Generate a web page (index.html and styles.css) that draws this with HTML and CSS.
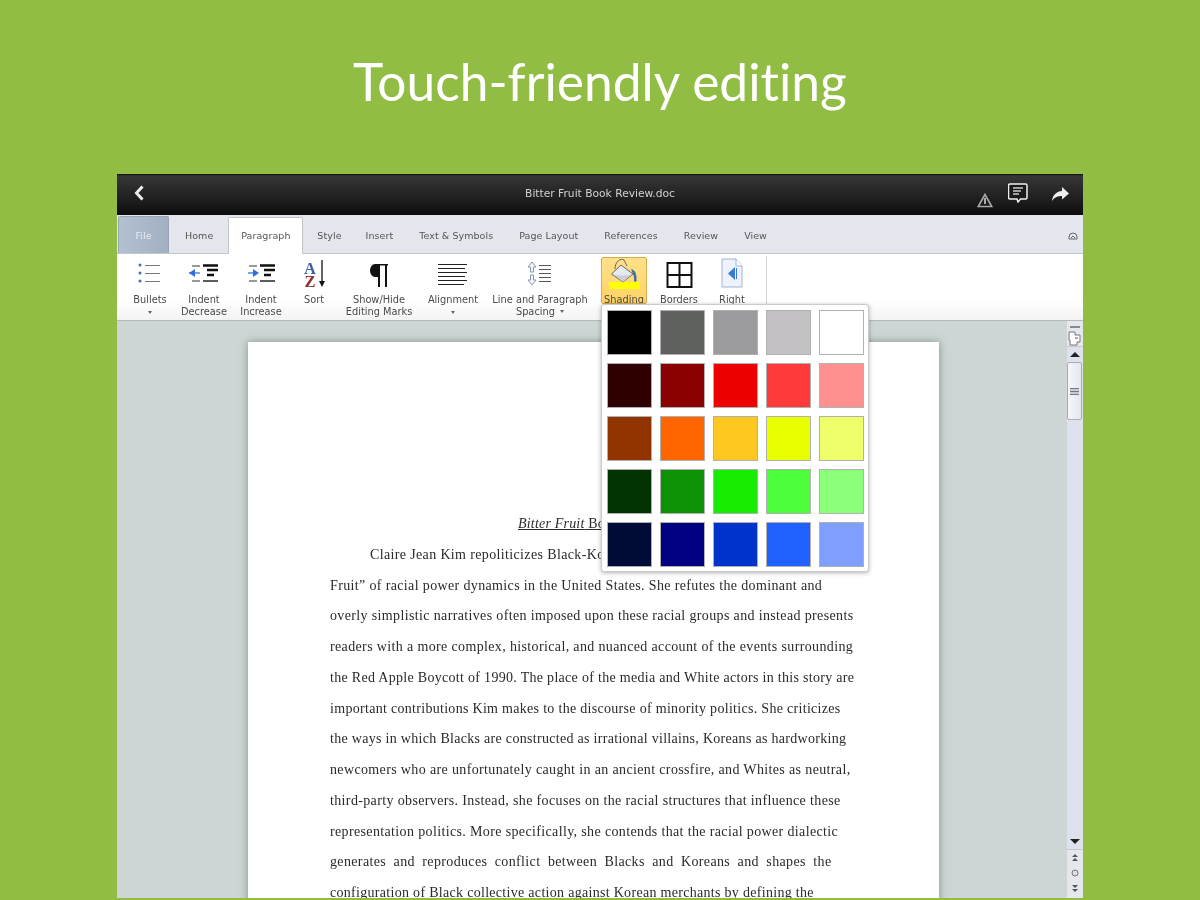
FILE: index.html
```html
<!DOCTYPE html>
<html lang="en">
<head>
<meta charset="utf-8">
<title>Touch-friendly editing</title>
<link rel="stylesheet" href="styles.css">
</head>
<body>
<h1 class="headline">Touch-friendly editing</h1>
<div class="window">
  <header class="titlebar">
    <svg class="back" viewBox="0 0 12 16"><path d="M9.500 1.500 3.500 8l6 6.500" fill="none" stroke="#eee" stroke-width="3"/></svg>
    <span class="doc-name">Bitter Fruit Book Review.doc</span>
    <div class="title-actions">
      <svg class="warn" viewBox="0 0 16 15"><path d="M8 1.500 1.200 13.500h13.600z" fill="none" stroke="#aaa" stroke-width="1.600"/><path d="M8 5v6" stroke="#aaa" stroke-width="2"/></svg>
      <svg class="comment" viewBox="0 0 20 20"><path d="M2.500 1h15q1.500 0 1.500 1.500v12q0 1.500-1.500 1.500h-5l-2.500 3-1-3h-7q-1.500 0-1.500-1.500v-12q0-1.500 1.500-1.500z" fill="#1a1a1a" stroke="#eee" stroke-width="1.500"/><path d="M5 5h10M5 8h8M5 11h6" stroke="#ccc" stroke-width="1.300"/></svg>
      <svg class="share" viewBox="0 0 19 17"><path d="M11 1l7 6.500-7 6v-3.500c-4 0-7.500 1-10 5 .5-5.500 4-9.500 10-10z" fill="#eee"/></svg>
    </div>
  </header>
  <nav class="tabs">
    <span class="tab tab-file">File</span>
    <span class="tab tab-home">Home</span>
    <span class="tab tab-active">Paragraph</span>
    <span class="tab tab-style">Style</span>
    <span class="tab tab-insert">Insert</span>
    <span class="tab tab-plain">Text &amp; Symbols</span>
    <span class="tab tab-plain">Page Layout</span>
    <span class="tab tab-plain">References</span>
    <span class="tab tab-plain">Review</span>
    <span class="tab tab-plain">View</span>
    <svg class="collapse" viewBox="0 0 10 8"><path d="M1 7V5a4 4 0 0 1 8 0v2z" fill="none" stroke="#666"/><path d="M3 6l2-2 2 2" fill="none" stroke="#666"/></svg>
  </nav>
  <div class="ribbon">
    <div class="tool w44">
      <svg class="ico" viewBox="0 0 36 36"><g fill="#3c6fc4"><circle cx="8" cy="9" r="1.500"/><circle cx="8" cy="17" r="1.500"/><circle cx="8" cy="25" r="1.500"/></g><path d="M13 9.500h15M13 17.500h15M13 25.500h15" stroke="#777"/></svg>
      <span class="label">Bullets</span><span class="caret"></span>
    </div>
    <div class="tool w64">
      <svg class="ico" viewBox="0 0 36 36"><path d="M17 9.500h15M21 14h11M21 19h7" stroke="#111" stroke-width="2.400"/><path d="M17 25h15" stroke="#333" stroke-width="1.600"/><path d="M3 17h11" stroke="#7aa6e8" stroke-width="2"/><path d="M3 17l6-4v8z" fill="#2f6fd8"/><path d="M6 10h8M6 25h8" stroke="#999" stroke-width="2"/></svg>
      <span class="label">Indent<br>Decrease</span>
    </div>
    <div class="tool w50">
      <svg class="ico" viewBox="0 0 36 36"><path d="M17 9.500h15M21 14h11M21 19h7" stroke="#111" stroke-width="2.400"/><path d="M17 25h15" stroke="#333" stroke-width="1.600"/><path d="M5 17h9" stroke="#7aa6e8" stroke-width="2"/><path d="M16 17l-6-4v8z" fill="#2f6fd8"/><path d="M6 10h8M6 25h8" stroke="#999" stroke-width="2"/></svg>
      <span class="label">Indent<br>Increase</span>
    </div>
    <div class="tool w56">
      <svg class="ico" viewBox="0 0 36 36"><text x="8" y="18" class="az az-a">A</text><text x="8.500" y="31" class="az az-z">Z</text><path d="M26 4v24" stroke="#111" stroke-width="1.300"/><path d="M23 25h6l-3 6z" fill="#111"/></svg>
      <span class="label">Sort</span>
    </div>
    <div class="tool w74">
      <svg class="ico" viewBox="0 0 36 36"><path d="M17 8h-3a5 6.500 0 0 0 0 13h3zM17 8h10v1.500h-1v21.500h-2V9.500h-5v21.500h-2z" fill="#111"/></svg>
      <span class="label">Show/Hide<br>Editing Marks</span>
    </div>
    <div class="tool w74">
      <svg class="ico" viewBox="0 0 36 36"><path d="M3 8.500h29M3 12.500h27M3 16.500h29M3 20.500h27M3 24.500h29M3 28.500h26" stroke="#222"/></svg>
      <span class="label">Alignment</span><span class="caret"></span>
    </div>
    <div class="tool w100">
      <svg class="ico" viewBox="0 0 36 36"><path d="M14 11l-4-5-4 5h2.500v5h3v-5zM14 24l-4 5-4-5h2.500v-5h3v5z" fill="#f4f6fb" stroke="#8b97a8"/><path d="M17 9.500h12M17 13.500h12M17 17.500h12M17 21.500h12M17 25.500h12" stroke="#555"/></svg>
      <span class="label">Line and Paragraph<br>Spacing <i class="caret caret-inline"></i></span>
    </div>
    <div class="tool tool-on">
      <svg class="ico" viewBox="0 0 36 36"><rect x="3" y="25" width="31" height="7" fill="#ffff00"/><path d="M25 12c4 1 6 4 5.500 12-.5 1-2 1-2.500 0 0-3 0-5-1-7z" fill="#3f6fa8"/><path d="M5.500 17 15 8l12 9-10 8z" fill="#e6e9ef" stroke="#666"/><path d="M7 17c5 2 13 2 19 0l-9 8z" fill="#c9ced8"/><path d="M9 12C9 4 15 1 18 3l3 6" fill="none" stroke="#666"/></svg>
      <span class="label">Shading</span>
    </div>
    <div class="tool w64">
      <svg class="ico" viewBox="0 0 36 36"><path d="M6.500 7h24v24h-24zM18.500 7v24M6.500 19h24" fill="none" stroke="#111" stroke-width="2"/></svg>
      <span class="label">Borders</span>
    </div>
    <div class="tool w42">
      <svg class="ico" viewBox="0 0 36 36"><path d="M8 3h14l6 7v21H8z" fill="#eef3fb" stroke="#9fb4d6"/><path d="M22 3v7h6" fill="#fff" stroke="#9fb4d6"/><path d="M21 11v13l-7-6.500z" fill="#3a78d8"/><path d="M22.500 12v11" stroke="#3a78d8"/></svg>
      <span class="label">Right</span>
    </div>
    <span class="ribbon-end"></span>
  </div>
  <div class="workspace">
    <div class="doc-area">
      <article class="page">
        <p class="doc-title"><u><i>Bitter Fruit</i> Book Review</u></p>
        <p class="doc-body"><span class="indent"></span>Claire Jean Kim repoliticizes Black-Korean conflict in her book <i>Bitter</i><br>
Fruit” of racial power dynamics in the United States. She refutes the dominant and<br>
overly simplistic narratives often imposed upon these racial groups and instead presents<br>
readers with a more complex, historical, and nuanced account of the events surrounding<br>
<span class="tight">the Red Apple Boycott of 1990. The place of the media and White actors in this story are</span><br>
<span class="tight">important contributions Kim makes to the discourse of minority politics. She criticizes</span><br>
<span class="tight">the ways in which Blacks are constructed as irrational villains, Koreans as hardworking</span><br>
newcomers who are unfortunately caught in an ancient crossfire, and Whites as neutral,<br>
third-party observers. Instead, she focuses on the racial structures that influence these<br>
representation politics. More specifically, she contends that the racial power dialectic<br>
<span class="wide">generates and reproduces conflict between Blacks and Koreans and shapes the</span><br>
<span class="tight">configuration of Black collective action against Korean merchants by defining the</span></p>
      </article>
    </div>
    <aside class="scrollbar">
      <div class="split"><span class="split-bar"></span><svg class="split-ico" viewBox="0 0 14 15"><path d="M1 1h6v3h5v7H9v3H2V9H1z" fill="#fff" stroke="#777"/><path d="M7 7h3" stroke="#555"/></svg></div>
      <div class="arrow-btn"><span class="arr-up"></span></div>
      <div class="track">
        <div class="thumb"><span class="grip"></span></div>
      </div>
      <div class="arrow-btn"><span class="arr-down"></span></div>
      <div class="nav-btns">
        <svg class="nav-ico" viewBox="0 0 10 10"><path d="M5 1 8 4H2zM5 5 8 8H2z" fill="#555"/></svg>
        <svg class="nav-ico" viewBox="0 0 10 10"><circle cx="5" cy="5" r="3" fill="#ddd" stroke="#777"/></svg>
        <svg class="nav-ico" viewBox="0 0 10 10"><path d="M2 2h6L5 5zM2 6h6L5 9z" fill="#555"/></svg>
      </div>
    </aside>
  </div>
  <div class="palette">
    <span class="sw c00"></span><span class="sw c01"></span><span class="sw c02"></span><span class="sw c03"></span><span class="sw c04"></span>
    <span class="sw c10"></span><span class="sw c11"></span><span class="sw c12"></span><span class="sw c13"></span><span class="sw c14"></span>
    <span class="sw c20"></span><span class="sw c21"></span><span class="sw c22"></span><span class="sw c23"></span><span class="sw c24"></span>
    <span class="sw c30"></span><span class="sw c31"></span><span class="sw c32"></span><span class="sw c33"></span><span class="sw c34"></span>
    <span class="sw c40"></span><span class="sw c41"></span><span class="sw c42"></span><span class="sw c43"></span><span class="sw c44"></span>
  </div>
</div>
</body>
</html>
```

FILE: styles.css
```css
* { box-sizing: border-box; }
html, body { margin: 0; height: 900px; overflow: hidden; }
body { background: #92bd44; font-family: "DejaVu Sans", sans-serif; }

.headline {
  margin: 0;
  height: 174px;
  padding-top: 49px;
  text-align: center;
  font: 400 51.500px/64px Lato, sans-serif;
  font-variant-ligatures: none;
  color: #fff;
}

.window {
  position: relative;
  width: 966px;
  height: 724px;
  margin-left: 117px;
  display: flex;
  flex-direction: column;
  overflow: hidden;
  filter: blur(.3px);
}

.titlebar {
  flex: 0 0 41px;
  display: flex;
  align-items: center;
  justify-content: center;
  position: relative;
  padding-bottom: 3px;
  background: linear-gradient(#0e0e0e 0, #363636 2px, #1c1c1c 28px, #0c0c0c 100%);
}
.back { position: absolute; left: 16px; top: 11px; width: 12px; height: 16px; }
.doc-name { font-size: 10.700px; color: #d0d0d0; }
.title-actions { position: absolute; inset: 0; }
.warn { position: absolute; left: 860px; top: 19px; width: 16px; height: 15px; }
.comment { position: absolute; left: 891px; top: 9px; width: 20px; height: 20px; }
.share { position: absolute; left: 934px; top: 12px; width: 19px; height: 17px; }

.tabs {
  flex: 0 0 39px;
  display: flex;
  align-items: flex-end;
  position: relative;
  padding-left: 1px;
  background: #e4e6ee;
  border-bottom: 1px solid #c4c6cc;
}
.tab { font-size: 9.500px; letter-spacing: .07px; line-height: 37px; height: 36px; color: #555; }
.tab-file {
  width: 51px;
  height: 37px;
  line-height: 37px;
  text-align: center;
  color: #e6ecf4;
  background: linear-gradient(90deg, #b2c0d2, #a3b0c1);
  border-radius: 2px 2px 0 0;
  border: 1px solid #98a4b4;
  border-bottom: 0;
}
.tab-home { margin-left: 16px; }
.tab-active {
  margin-left: 15px;
  width: 75px;
  height: 37px;
  margin-bottom: -1px;
  line-height: 36px;
  text-align: center;
  background: #fff;
  border: 1px solid #c4c6cc;
  border-bottom: 0;
  border-radius: 2px 2px 0 0;
}
.tab-style { margin-left: 14px; }
.tab-insert { margin-left: 24px; }
.tab-plain { margin-left: 26px; }
.collapse { position: absolute; right: 5px; top: 17px; width: 10px; height: 8px; }

.ribbon {
  flex: 0 0 67px;
  display: flex;
  padding: 2px 0 0 11px;
  background: linear-gradient(#fff 70%, #f3f3f3);
  border-bottom: 1px solid #b5b9b9;
}
.tool { display: flex; flex-direction: column; align-items: center; height: 64px; }
.w42 { width: 42px; }
.w44 { width: 44px; }
.w50 { width: 50px; }
.w56 { width: 56px; }
.w64 { width: 64px; }
.w74 { width: 74px; }
.w100 { width: 100px; }
.ico { width: 36px; height: 36px; flex: none; }
.az { font-family: "Liberation Serif", serif; font-weight: 700; font-size: 16.500px; }
.az-a { fill: #3c5fa8; }
.az-z { fill: #8c3030; }
.label {
  font-size: 9.800px;
  line-height: 12px;
  margin-top: 2px;
  color: #4a4a4a;
  text-align: center;
  white-space: nowrap;
}
.caret {
  display: block;
  margin-top: 5px;
  width: 0;
  height: 0;
  border: 2.500px solid transparent;
  border-top: 3px solid #666;
  border-bottom: 0;
}
.caret-inline { display: inline-block; margin: 0 0 2px 2px; }
.tool-on {
  width: 46px;
  height: 47px;
  margin: 1px 0 0 11px;
  overflow: hidden;
  background: linear-gradient(#ffe08a, #ffd364);
  border: 1px solid #d8ac4c;
  border-radius: 2px;
}
.tool-on .ico { margin-top: -1px; }
.tool-on .label { margin-top: 1px; }
.ribbon-end { width: 0; margin-left: 13px; height: 60px; border-left: 1px solid #d6d6d6; }

.workspace { flex: 1; min-height: 0; display: flex; background: #cdd6d4; }
.doc-area { flex: 1; min-width: 0; overflow: hidden; padding: 21px 0 0 131px; }
.page {
  width: 691px;
  min-height: 700px;
  padding: 167px 0 0 82px;
  background: #fff;
  box-shadow: 0 0 8px rgba(70, 90, 85, .55);
  font: 14px/30.750px "Liberation Serif", serif;
  letter-spacing: .36px;
  color: #2a2a2a;
}
.page p { margin: 0; white-space: nowrap; }
.doc-title { width: 525px; text-align: center; letter-spacing: .2px; }
.indent { display: inline-block; width: 40px; }
.tight { letter-spacing: .3px; }
.wide { word-spacing: 3.600px; }

.scrollbar {
  flex: 0 0 16px;
  display: flex;
  flex-direction: column;
  align-items: center;
  background: #dfe2ec;
}
.split {
  flex: 0 0 26px;
  width: 100%;
  display: flex;
  flex-direction: column;
  align-items: center;
  gap: 3px;
  padding-top: 5px;
  background: #e6e7ec;
  border-bottom: 1px solid #c6c8ce;
}
.split-bar { width: 10px; height: 2px; background: #888; }
.split-ico { width: 14px; height: 15px; }
.arrow-btn { flex: 0 0 15px; width: 100%; display: flex; align-items: center; justify-content: center; }
.arr-up, .arr-down { width: 0; height: 0; border: 5px solid transparent; }
.arr-up { border-bottom: 5px solid #222; border-top: 0; }
.arr-down { border-top: 5px solid #222; border-bottom: 0; }
.track { flex: 1; width: 100%; }
.thumb {
  width: 15px;
  height: 58px;
  margin-right: 1px;
  display: flex;
  align-items: center;
  justify-content: center;
  background: linear-gradient(90deg, #f6f7fa, #e4e6ee);
  border: 1px solid #a8acb6;
  border-radius: 2px;
}
.grip {
  width: 9px;
  height: 7px;
  background: repeating-linear-gradient(#777a84 0 1px, #c8cad2 1px 3px);
}
.nav-btns {
  flex: 0 0 49px;
  width: 100%;
  display: flex;
  flex-direction: column;
  align-items: center;
  justify-content: space-around;
  padding-bottom: 2px;
  background: #e6e7ec;
  border-top: 1px solid #c6c8ce;
}
.nav-ico { width: 10px; height: 10px; }

.palette {
  position: absolute;
  left: 484px;
  top: 130px;
  width: 268px;
  height: 268px;
  padding: 5px;
  display: grid;
  grid-template-columns: repeat(5, 45px);
  grid-auto-rows: 45px;
  gap: 8px;
  background: #fff;
  border: 1px solid #c8cccc;
  border-radius: 3px;
  box-shadow: 0 1px 4px rgba(0, 0, 0, .3);
}
.sw { border: 1px solid #b0b0b0; }
.c00 { background: #000; }
.c01 { background: #5f615f; }
.c02 { background: #9b9a9c; }
.c03 { background: #c4c1c4; }
.c04 { background: #fff; }
.c10 { background: #300000; }
.c11 { background: #8b0000; }
.c12 { background: #ee0000; }
.c13 { background: #ff3a3a; }
.c14 { background: #ff9090; }
.c20 { background: #913400; }
.c21 { background: #ff6600; }
.c22 { background: #ffc821; }
.c23 { background: #e8ff00; }
.c24 { background: #eeff6a; }
.c30 { background: #003300; }
.c31 { background: #0e9205; }
.c32 { background: #17ec00; }
.c33 { background: #4dff3a; }
.c34 { background: #8cff7a; }
.c40 { background: #000c38; }
.c41 { background: #000080; }
.c42 { background: #0032cc; }
.c43 { background: #2060ff; }
.c44 { background: #7f9fff; }
```
